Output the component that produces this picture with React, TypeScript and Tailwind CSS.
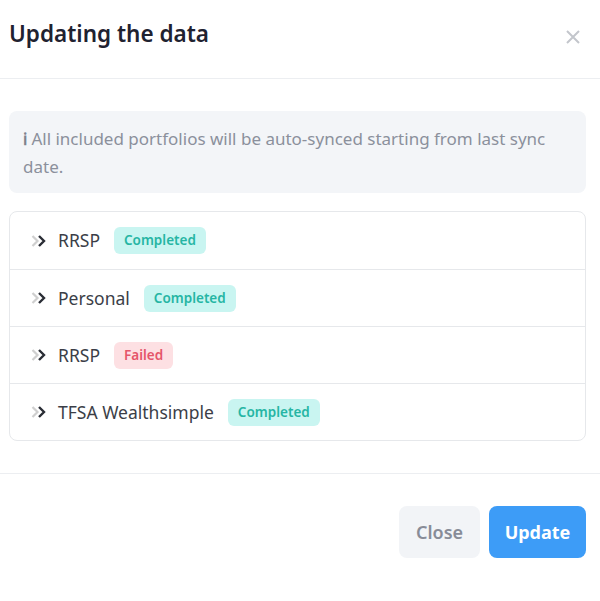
import React from "react";

const font = { fontFamily: '"Noto Sans", "Segoe UI", sans-serif' };

function Chevrons() {
  return (
    <svg width="16" height="14" viewBox="0 0 16 14" className="shrink-0">
      <path d="M1.5 2 L6.5 7 L1.5 12" fill="none" stroke="#cfcfcf" strokeWidth="2.2" />
      <path d="M8 2 L13 7 L8 12" fill="none" stroke="#2a2d35" strokeWidth="2.4" />
    </svg>
  );
}

function Badge({ status }: { status: "Completed" | "Failed" }) {
  if (status === "Failed") {
    return (
      <span className="rounded-md bg-[#fde0e3] px-[10px] h-[27px] flex items-center text-[13.5px] font-semibold text-[#e5566a]">
        Failed
      </span>
    );
  }
  return (
    <span className="rounded-md bg-[#c9f5f1] px-[10px] h-[27px] flex items-center text-[13.5px] font-semibold text-[#26b5a4]">
      Completed
    </span>
  );
}

const rows: { name: string; status: "Completed" | "Failed" }[] = [
  { name: "RRSP", status: "Completed" },
  { name: "Personal", status: "Completed" },
  { name: "RRSP", status: "Failed" },
  { name: "TFSA Wealthsimple", status: "Completed" },
];

export default function App() {
  return (
    <div className="w-[600px] h-[601px] bg-white flex flex-col" style={font}>
      <div className="h-[79px] border-b border-[#eceef1] flex items-center justify-between pl-[9px] pr-[20px] pb-[10px]">
        <h1 className="text-[22.5px] font-semibold text-[#1f2230]">Updating the data</h1>
        <svg width="14" height="14" viewBox="0 0 14 14" className="mt-[6px]">
          <path d="M1 1 L13 13 M13 1 L1 13" stroke="#c3c6cc" strokeWidth="2" />
        </svg>
      </div>
      <div className="pl-[9px] pr-[14px] pt-[32px] pb-[32px] border-b border-[#eceef1] flex flex-col gap-[18px]">
        <div className="bg-[#f3f5f8] rounded-lg h-[82px] px-[14px] flex items-center">
          <p className="text-[17px] leading-[27px] text-[#8b909c]">
            <span className="font-bold text-[#7d828e]" style={{ fontFamily: '"DejaVu Serif", serif' }}>ℹ</span> All included portfolios will be auto-synced starting from last sync date.
          </p>
        </div>
        <div className="border border-[#e6e8eb] rounded-lg flex flex-col">
          {rows.map((r, i) => (
            <div
              key={i}
              className={`h-[57px] flex items-center pl-[21px] ${i > 0 ? "border-t border-[#e6e8eb]" : ""}`}
            >
              <Chevrons />
              <span className="ml-[11px] text-[17.5px] text-[#3b3e47]">{r.name}</span>
              <span className="ml-[14px]">
                <Badge status={r.status} />
              </span>
            </div>
          ))}
        </div>
      </div>
      <div className="flex justify-end gap-[9px] pt-[32px] pr-[14px]">
        <button className="h-[52px] w-[81px] rounded-lg bg-[#f2f4f7] text-[18px] font-semibold text-[#888c98]">
          Close
        </button>
        <button className="h-[52px] w-[97px] rounded-lg bg-[#3d9cf7] text-[18px] font-bold text-white">
          Update
        </button>
      </div>
    </div>
  );
}
